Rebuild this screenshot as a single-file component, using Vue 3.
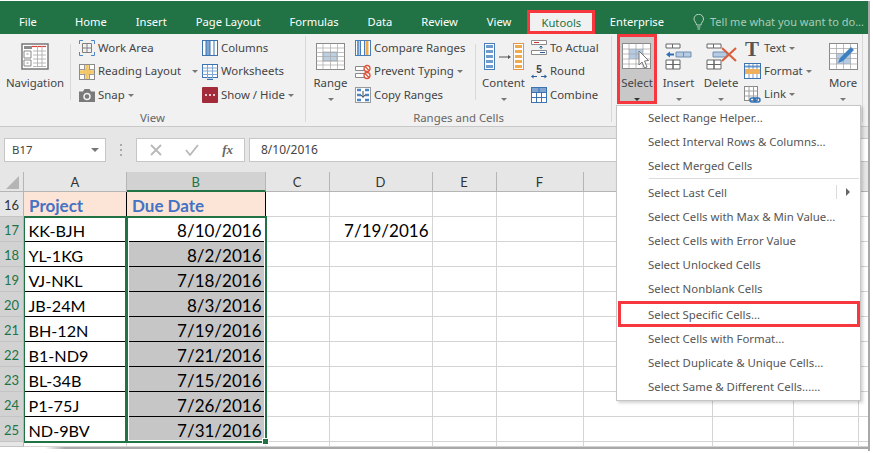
<template>
  <div class="window">
    <div class="tabs">
      <span v-for="tab in tabs" :key="tab" class="tab" :class="{ first: tab === 'File', active: tab === 'Kutools' }">{{ tab }}</span>
      <span class="tell">
        <svg width="12" height="16" viewBox="0 0 12 16" fill="none" stroke="#b9d3c4" stroke-width="1">
          <path d="M3.500 11c0-2.500-2.500-3.500-2.500-6a4.750 4.750 0 0 1 9.500 0c0 2.500-2.500 3.500-2.500 6z" />
          <path d="M4 13h3.500M4.500 15h2.500" />
        </svg>
        Tell me what you want to do...
      </span>
    </div>

    <div class="ribbon">
      <div class="group view-group">
        <div class="group-body">
          <div class="big nav-btn">
            <svg width="28" height="27" viewBox="0 0 28 27">
              <rect x="1" y="1" width="26" height="25" fill="#fff" stroke="#777" stroke-width="1.500" />
              <rect x="3" y="3" width="8" height="3" fill="#8c8c8c" />
              <path d="M11 3.500h14" stroke="#d9443a" stroke-width="1.200" />
              <path d="M3 8h7v7H3zM3 17h7v6H3zM5.500 11h2M5.500 20h2" fill="none" stroke="#888" />
              <path d="M12 8h13M12 12h13M12 16h13M12 20h13M12 23.500h13M16.500 3v21M21 3v21" stroke="#a8a8a8" stroke-width=".8" />
            </svg>
            <span>Navigation</span>
          </div>
          <i class="sep"></i>
          <div class="list list-view-1">
            <div class="row">
              <svg width="16" height="16" viewBox="0 0 16 16" fill="none">
                <path d="M.5 4V.5H4M12 .5h3.500V4M15.500 12v3.500H12M4 15.500H.5V12" stroke="#4a86c5" />
                <path d="M3.500 3.500h9v9h-9zM3.500 8h9M8 3.500v9" stroke="#808080" />
              </svg>
              <span>Work Area</span>
            </div>
            <div class="row">
              <svg width="16" height="16" viewBox="0 0 16 16">
                <rect x=".5" y=".5" width="15" height="15" fill="#fff" stroke="#8a8a8a" />
                <path d="M.5 5.500h15M.5 10.500h15M5.500.5v15M10.500.5v15" stroke="#9a9a9a" />
                <path d="M8 1v14M1 8h14" stroke="#f5c764" stroke-width="3.500" />
              </svg>
              <span>Reading Layout</span>
              <i class="caret caret-far"></i>
            </div>
            <div class="row">
              <svg width="16" height="13" viewBox="0 0 16 13">
                <path d="M0 2.500h4L5.500 0h5L12 2.500h4V13H0z" fill="#7a7a7a" />
                <circle cx="8" cy="7.500" r="3" fill="none" stroke="#f1f1f1" stroke-width="1.500" />
              </svg>
              <span>Snap</span>
              <i class="caret"></i>
            </div>
          </div>
          <div class="list">
            <div class="row">
              <svg width="16" height="16" viewBox="0 0 16 16">
                <rect x=".5" y=".5" width="15" height="15" fill="#fff" stroke="#3d73b0" />
                <rect x="4" y="1" width="4" height="14" fill="#7fa5d0" />
                <path d="M4 .5v15M8 .5v15M12 .5v15" stroke="#3d73b0" />
              </svg>
              <span>Columns</span>
            </div>
            <div class="row">
              <svg width="16" height="16" viewBox="0 0 16 16">
                <rect x=".5" y=".5" width="15" height="13" fill="#fff" stroke="#3d73b0" />
                <path d="M.5 4h15M.5 7h15M.5 10.500h15M5.500 1v13M10.500 1v13" stroke="#7fa5d0" />
                <path d="M5 15.500h6" stroke="#3d73b0" stroke-width="1.500" />
              </svg>
              <span>Worksheets</span>
            </div>
            <div class="row">
              <svg width="16" height="16" viewBox="0 0 16 16">
                <rect width="16" height="16" rx="1" fill="#a32a38" />
                <path d="M3 8h2M7 8h2M11 8h2" stroke="#fff" stroke-width="1.500" />
              </svg>
              <span>Show / Hide</span>
              <i class="caret"></i>
            </div>
          </div>
        </div>
        <div class="group-label">View</div>
      </div>

      <div class="group ranges-group">
        <div class="group-body">
          <div class="big range-btn">
            <svg width="29" height="27" viewBox="0 0 29 27">
              <rect x=".5" y=".5" width="28" height="26" fill="#fff" stroke="#8a8a8a" />
              <rect x="7" y="9" width="14" height="9" fill="#bcd0e4" stroke="#9a9a9a" stroke-width=".6" />
              <path d="M.5 5h28M.5 9.500h28M.5 13.500h28M.5 18h28M.5 22h28M7 .5v26M14.500.5v26M21.500.5v26" stroke="#a8a8a8" stroke-width=".7" />
            </svg>
            <span>Range</span>
            <i class="caret big-caret"></i>
          </div>
          <div class="list list-compare">
            <div class="row">
              <svg width="16" height="16" viewBox="0 0 16 16">
                <rect x=".5" y=".5" width="15" height="15" fill="#fff" stroke="#4a7db8" />
                <rect x="2" y="1" width="2.500" height="14" fill="#6f9ccc" />
                <rect x="10.500" y="1" width="3" height="14" fill="#efa94e" />
                <path d="M5.500 1v14M9.500 1v14" stroke="#4a7db8" />
              </svg>
              <span>Compare Ranges</span>
            </div>
            <div class="row">
              <svg width="16" height="16" viewBox="0 0 16 16">
                <path d="M.5 2.500h9v4h-9zM.5 9.500h9v4h-9z" fill="#fff" stroke="#8a8a8a" />
                <g fill="#fff" stroke="#d9543c" stroke-width="1.300">
                  <circle cx="12" cy="4.500" r="3" />
                  <circle cx="12" cy="11.500" r="3" />
                  <path d="M10 2.500l4 4M10 9.500l4 4" />
                </g>
              </svg>
              <span>Prevent Typing</span>
              <i class="caret"></i>
            </div>
            <div class="row">
              <svg width="16" height="16" viewBox="0 0 16 16">
                <rect x=".5" y=".5" width="15" height="15" fill="#fff" stroke="#9a9a9a" />
                <path d="M2 3h4M2 8h4M2 13h4M10 3h4M10 8h4M10 13h4" stroke="#4a86c5" stroke-width="2.500" />
                <path d="M8 4v6M6 8l2 2.500L10 8" fill="none" stroke="#444" />
              </svg>
              <span>Copy Ranges</span>
            </div>
          </div>
          <i class="sep"></i>
          <div class="big content-btn">
            <svg width="40" height="27" viewBox="0 0 40 27">
              <rect x=".5" y=".5" width="10" height="26" fill="#fff" stroke="#4a7db8" />
              <rect x="29.500" y=".5" width="10" height="26" fill="#fff" stroke="#e59545" />
              <path d="M2 3.500h7M2 8.500h7M2 13.500h7M2 18.500h7M2 23.500h7" stroke="#6f9ccc" stroke-width="3" />
              <path d="M31 3.500h7M31 8.500h7M31 13.500h7M31 18.500h7M31 23.500h7" stroke="#efa94e" stroke-width="3" />
              <path d="M15 14h9" stroke="#555" />
              <path d="M27 14l-3-2v4z" fill="#555" />
            </svg>
            <span>Content</span>
            <i class="caret big-caret"></i>
          </div>
          <div class="list">
            <div class="row">
              <svg width="16" height="16" viewBox="0 0 16 16">
                <path d="M.5.500h15v4H.5zM.5 10.500h15v4H.5z" fill="#fff" stroke="#8a8a8a" />
                <path d="M3 2.500h5" stroke="#c33" />
                <path d="M9 12.500h5" stroke="#2a5f9e" />
                <path d="M10 9V6M8.500 7.500L10 6l1.500 1.500" fill="none" stroke="#2a5f9e" />
              </svg>
              <span>To Actual</span>
            </div>
            <div class="row">
              <svg width="16" height="16" viewBox="0 0 16 16">
                <text x="8" y="9" text-anchor="middle" class="five">5</text>
                <path d="M1 12.500h5M10 12.500h5" stroke="#2a5f9e" />
                <path d="M0 12.500l2.500-2v4zM16 12.500l-2.500-2v4z" fill="#2a5f9e" />
              </svg>
              <span>Round</span>
            </div>
            <div class="row">
              <svg width="16" height="16" viewBox="0 0 16 16">
                <rect x=".5" y=".5" width="15" height="15" fill="#fff" stroke="#3d73b0" />
                <rect x="1" y="1" width="14" height="4" fill="#7fa5d0" />
                <path d="M.5 5.500h15M.5 10.500h15M5.500 5.500v10M10.500 5.500v10M8 .5v5" stroke="#3d73b0" />
              </svg>
              <span>Combine</span>
            </div>
          </div>
        </div>
        <div class="group-label">Ranges and Cells</div>
      </div>

      <div class="group last-group">
        <div class="group-body">
          <div class="big select-btn">
            <svg width="30" height="27" viewBox="0 0 30 27">
              <rect x=".5" y=".5" width="28" height="25" fill="#fff" stroke="#8a8a8a" />
              <rect x="7" y="6" width="14" height="10" fill="#b5cbe3" />
              <path d="M.5 6h28M.5 11h28M.5 16h28M.5 21h28M7 .5v25M14 .5v25M21 .5v25" stroke="#a0a0a0" stroke-width=".7" />
              <path d="M17 8v14l3-3 2.500 6 2.500-1-2.500-6 4-.5z" fill="#fff" stroke="#777" />
            </svg>
            <span>Select</span>
            <i class="caret big-caret dark"></i>
          </div>
          <div class="big insert-btn">
            <svg width="27" height="27" viewBox="0 0 27 27" fill="#fff" stroke="#666">
              <path d="M1 1h6.500v4H1zM7.500 1H15v4H7.500zM1 17h7v4.500H1zM8 17h7v4.500H8zM1 21.500h7V26H1zM8 21.500h7V26H8z" />
              <path d="M11 9h7.500v5H11zM18.500 9H26v5h-7.500z" fill="#b5cbe3" stroke="#6f8fb0" />
              <path d="M9 11.500H3" stroke="#2f6fb5" stroke-width="2" />
              <path d="M1 11.500L5 8.500v6z" fill="#2f6fb5" stroke="none" />
            </svg>
            <span>Insert</span>
            <i class="caret big-caret"></i>
          </div>
          <div class="big delete-btn">
            <svg width="31" height="27" viewBox="0 0 31 27" fill="#fff" stroke="#666">
              <path d="M1 1h6.500v4H1zM7.500 1H15v4H7.500zM1 17h7v4.500H1zM8 17h7v4.500H8zM1 21.500h7V26H1zM8 21.500h7V26H8z" />
              <path d="M7 9h14v5H7z" fill="#b5cbe3" stroke="#6f8fb0" />
              <path d="M16 5l14 13M30 5L16 18" stroke="#d9603f" stroke-width="2.200" />
            </svg>
            <span>Delete</span>
            <i class="caret big-caret"></i>
          </div>
          <div class="list list-text">
            <div class="row">
              <svg width="17" height="20" viewBox="0 0 17 20">
                <text x="8" y="18" text-anchor="middle" class="big-t">T</text>
              </svg>
              <span>Text</span>
              <i class="caret"></i>
            </div>
            <div class="row">
              <svg width="17" height="16" viewBox="0 0 17 16">
                <rect x=".5" y=".5" width="16" height="15" fill="#fff" stroke="#3d73b0" />
                <path d="M1 3.500h15" stroke="#6f9ccc" stroke-width="2" />
                <rect x="1" y="6" width="15" height="5" fill="#efb05e" />
                <path d="M5 1v5M9 1v5M13 1v5M5 11v4M9 11v4M13 11v4" stroke="#3d73b0" stroke-width=".7" />
              </svg>
              <span>Format</span>
              <i class="caret"></i>
            </div>
            <div class="row">
              <svg width="17" height="17" viewBox="0 0 17 17">
                <rect x=".5" y=".5" width="13" height="14" fill="#fff" stroke="#8a8a8a" />
                <path d="M.5 5h13M.5 10h13M5 .5v14M9.500.5v14" stroke="#a0a0a0" />
                <rect x="6" y="12" width="6" height="4" rx="2" fill="none" stroke="#2f6fb5" stroke-width="1.500" />
                <rect x="10" y="12" width="6" height="4" rx="2" fill="none" stroke="#2f6fb5" stroke-width="1.500" />
              </svg>
              <span>Link</span>
              <i class="caret"></i>
            </div>
          </div>
          <div class="big more-btn">
            <svg width="29" height="27" viewBox="0 0 29 27">
              <rect x=".5" y=".5" width="28" height="26" fill="#fff" stroke="#8a8a8a" />
              <rect x="7.500" y="10" width="14" height="11" fill="#b5cbe3" />
              <path d="M.5 5.500h28M.5 10.500h28M.5 15.500h28M.5 21h28M7.500 .5v26M14.500 .5v26M21.500 .5v26" stroke="#a0a0a0" stroke-width=".7" />
              <path d="M9 20l2-5L22 4l3 3-11 11z" fill="#3d7fc0" />
            </svg>
            <span>More</span>
            <i class="caret big-caret"></i>
          </div>
        </div>
      </div>
    </div>

    <div class="formula-bar">
      <div class="name-box">
        <span>B17</span>
        <i class="name-caret"></i>
      </div>
      <div class="dots"><i></i><i></i><i></i></div>
      <div class="fx-box">
        <svg width="12" height="12" viewBox="0 0 12 12" fill="none" stroke="#b8b8b8" stroke-width="1.800"><path d="M1 1l10 10M11 1L1 11" /></svg>
        <svg width="14" height="12" viewBox="0 0 14 12" fill="none" stroke="#b8b8b8" stroke-width="1.800"><path d="M1 6l4 5 8-10" /></svg>
        <span class="fx">fx</span>
      </div>
      <div class="formula-input">8/10/2016</div>
    </div>

    <div class="sheet-wrap">
      <div class="sheet">
        <div class="corner"><i></i></div>
        <div v-for="col in columns" :key="col" class="col-head" :class="{ on: col === 'B' }">{{ col }}</div>
        <template v-for="row in rows" :key="row.num">
          <div class="row-head" :class="{ on: row.num >= 17 && row.num <= 25 }">{{ row.empty ? '' : row.num }}</div>
          <div class="cell" :class="cellClass(row, 'a')">{{ row.a }}</div>
          <div class="cell right" :class="cellClass(row, 'b')">{{ row.b }}</div>
          <div class="cell"></div>
          <div class="cell right">{{ row.d }}</div>
          <div v-for="n in 6" :key="n" class="cell"></div>
        </template>
      </div>
      <div class="sheet overlay">
        <div class="selection sel-a"></div>
        <div class="selection sel-b"><i class="handle"></i></div>
      </div>
    </div>
    <div class="bottom-shadow"></div>

    <ul class="menu">
      <li v-for="item in menuItems" :key="item.text" :class="{ boxed: item.boxed, divided: item.divided }">
        <span>{{ item.text }}</span>
        <i v-if="item.sub" class="sub-arrow"></i>
      </li>
    </ul>
  </div>
</template>

<script setup>
const tabs = ['File', 'Home', 'Insert', 'Page Layout', 'Formulas', 'Data', 'Review', 'View', 'Kutools', 'Enterprise'];
const columns = ['A', 'B', 'C', 'D', 'E', 'F', 'G', 'H', 'I', ''];

const rows = [
  { num: 16, a: 'Project', b: 'Due Date', head: true },
  { num: 17, a: 'KK-BJH', b: '8/10/2016', d: '7/19/2016', active: true },
  { num: 18, a: 'YL-1KG', b: '8/2/2016' },
  { num: 19, a: 'VJ-NKL', b: '7/18/2016' },
  { num: 20, a: 'JB-24M', b: '8/3/2016' },
  { num: 21, a: 'BH-12N', b: '7/19/2016' },
  { num: 22, a: 'B1-ND9', b: '7/21/2016' },
  { num: 23, a: 'BL-34B', b: '7/15/2016' },
  { num: 24, a: 'P1-75J', b: '7/26/2016' },
  { num: 25, a: 'ND-9BV', b: '7/31/2016' },
  { num: 26, empty: true }
];

const menuItems = [
  { text: 'Select Range Helper...' },
  { text: 'Select Interval Rows & Columns...' },
  { text: 'Select Merged Cells' },
  { text: 'Select Last Cell', sub: true, divided: true },
  { text: 'Select Cells with Max & Min Value...' },
  { text: 'Select Cells with Error Value' },
  { text: 'Select Unlocked Cells' },
  { text: 'Select Nonblank Cells' },
  { text: 'Select Specific Cells...', boxed: true },
  { text: 'Select Cells with Format...' },
  { text: 'Select Duplicate & Unique Cells...' },
  { text: 'Select Same & Different Cells......' }
];

const cellClass = (row, col) => {
  if (row.empty) return '';
  if (row.head) return col === 'b' ? 'head-cell left' : 'head-cell';
  if (col === 'b') return row.active ? 'data' : 'data picked';
  return 'data name';
};
</script>

<style>
html, body {
  margin: 0;
  background: #fff;
}
</style>

<style scoped>
.window {
  position: relative;
  width: 870px;
  height: 450px;
  margin-top: 1px;
  font-family: "Noto Sans", sans-serif;
  font-size: 11.400px;
  color: #444;
  overflow: hidden;
  border-right: 2px solid #a8a8a8;
  box-sizing: border-box;
}

.tabs {
  display: flex;
  align-items: flex-end;
  height: 33px;
  background: #217346;
  color: #fff;
  font-size: 11.200px;
}

.tab {
  display: flex;
  align-items: center;
  height: 24px;
  padding: 0 14.500px 1px;
  white-space: nowrap;
  box-sizing: border-box;
}

.tab.first {
  padding: 0 0 1px 19px;
  margin-right: 23.500px;
}

.tab.active {
  justify-content: center;
  width: 68px;
  background: #f1f1f1;
  color: #217346;
  border: 3px solid #f6383e;
  padding: 0;
  margin: 0 0 0 1.500px;
}

.tell {
  display: flex;
  align-items: center;
  gap: 5px;
  height: 24px;
  padding-bottom: 1px;
  box-sizing: border-box;
  margin-left: 14.500px;
  font-size: 11px;
  color: #a9cbb8;
  white-space: nowrap;
}

.ribbon {
  display: flex;
  height: 93px;
  background: #f1f1f1;
  border-bottom: 1px solid #c9c9c9;
  box-sizing: border-box;
}

.group {
  display: flex;
  flex-direction: column;
  border-right: 1px solid #d8d8d8;
  margin: 2px 0 4px;
  box-sizing: border-box;
}

.view-group { width: 306px; }
.ranges-group { width: 306px; }
.last-group { width: 251px; margin-top: 0; }

.group-body {
  display: flex;
  flex: none;
  height: 72px;
}

.group-label {
  text-align: center;
  line-height: 14px;
  margin-top: 3px;
  color: #666;
}

.big {
  display: flex;
  flex-direction: column;
  align-items: center;
  flex: none;
  box-sizing: border-box;
  padding-top: 7px;
}

.big span {
  line-height: 16px;
  margin-top: 5px;
}

.big-caret {
  margin: 7px 0 0;
}

.nav-btn { width: 70px; }
.range-btn { width: 49px; }
.content-btn { width: 55px; }

.select-btn {
  width: 40px;
  height: 70px;
  margin-left: 5px;
  background: #c8c8c8;
  border: 3px solid #f6383e;
  padding-top: 6px;
}

.insert-btn { width: 43px; padding-top: 9px; }
.delete-btn { width: 42px; padding-top: 9px; }
.more-btn { width: 48px; margin-left: 5px; padding-top: 9px; }

.sep {
  display: block;
  flex: none;
  width: 1px;
  height: 56px;
  margin-top: 8px;
  background: #d8d8d8;
}

.list {
  display: flex;
  flex-direction: column;
  flex: none;
  padding-top: .5px;
}

.last-group .list {
  padding-top: 2.500px;
}

.list-view-1 {
  width: 123px;
  margin-left: 8px;
}

.list-compare {
  width: 120px;
}

.list-text {
  width: 70px;
  margin-left: 2px;
}

.row {
  display: flex;
  align-items: center;
  gap: 3px;
  height: 23.500px;
  white-space: nowrap;
}

.row span {
  padding-bottom: 2px;
}

.row svg {
  flex: none;
}

.caret {
  display: block;
  flex: none;
  width: 0;
  height: 0;
  border-left: 3px solid transparent;
  border-right: 3px solid transparent;
  border-top: 3px solid #777;
}

.caret-far {
  margin-left: 8px;
}

.caret.dark {
  border-top-color: #333;
}

.five {
  font: bold 10px "Liberation Sans", sans-serif;
  fill: #444;
}

.big-t {
  font: bold 21px "Liberation Serif", serif;
  fill: #555;
}

.formula-bar {
  display: flex;
  align-items: center;
  height: 45px;
  background: #e6e6e6;
  padding: 0 0 0 4px;
  box-sizing: border-box;
}

.name-box,
.fx-box,
.formula-input {
  display: flex;
  align-items: center;
  height: 24px;
  background: #fff;
  border: 1px solid #c6c6c6;
  box-sizing: border-box;
}

.name-box {
  justify-content: space-between;
  width: 102px;
  padding: 0 6px 0 7px;
}

.name-caret {
  width: 0;
  height: 0;
  border-left: 4px solid transparent;
  border-right: 4px solid transparent;
  border-top: 4px solid #777;
}

.dots {
  display: flex;
  flex-direction: column;
  gap: 3px;
  width: 30px;
  align-items: center;
}

.dots i {
  width: 2px;
  height: 2px;
  background: #aaa;
}

.fx-box {
  justify-content: space-between;
  width: 109px;
  padding: 0 11px 0 13px;
}

.fx {
  font: italic bold 13px "Liberation Serif", serif;
  color: #666;
}

.formula-input {
  flex: 1;
  margin-left: 4px;
  padding-left: 11px;
  font-size: 12px;
  border-right: none;
}

.sheet-wrap {
  display: grid;
}

.sheet {
  grid-area: 1 / 1;
  display: grid;
  grid-template-columns: 24px 103px 138.500px 64px 103px 64px 87px 129px 81px 65px 10px;
  grid-template-rows: 20px repeat(10, 25px) 5px;
  overflow: hidden;
  font-family: Lato, sans-serif;
  font-size: 17px;
  color: #000;
}

.overlay {
  pointer-events: none;
  overflow: visible;
}

.corner {
  display: flex;
  align-items: flex-end;
  justify-content: flex-end;
  padding: 0 4px 2px 0;
  background: #e6e6e6;
  border-right: 1px solid #b5b5b5;
  border-bottom: 1px solid #b5b5b5;
  box-sizing: border-box;
}

.corner i {
  width: 0;
  height: 0;
  border-left: 13px solid transparent;
  border-bottom: 13px solid #b5b5b5;
}

.col-head {
  background: #e6e6e6;
  border-right: 1px solid #b5b5b5;
  border-bottom: 1px solid #b5b5b5;
  box-sizing: border-box;
  text-align: center;
  font-size: 13px;
  line-height: 21px;
  color: #333;
}

.col-head.on {
  background: #d2d2d2;
  border-bottom: 2px solid #217346;
  color: #217346;
}

.row-head {
  background: #e6e6e6;
  border-right: 1px solid #b5b5b5;
  border-bottom: 1px solid #c4c4c4;
  box-sizing: border-box;
  text-align: center;
  font-size: 13px;
  line-height: 27px;
  color: #333;
  overflow: hidden;
}

.row-head.on {
  background: #d2d2d2;
  color: #217346;
}

.cell {
  border-right: 1px solid #d4d4d4;
  border-bottom: 1px solid #d4d4d4;
  box-sizing: border-box;
  padding: 0 3px 0 5px;
  line-height: 27px;
  white-space: nowrap;
  overflow: hidden;
}

.cell.right {
  text-align: right;
}

.cell.data {
  border-bottom-color: #000;
  border-right-color: #000;
}

.cell.name {
  font-size: 16.200px;
  padding-left: 4.500px;
}

.cell.picked {
  background: #c6c6c6;
}

.cell.head-cell {
  background: #fce4d6;
  border-right-color: #000;
  border-bottom-color: #000;
  font-weight: 700;
  color: #4472c4;
}

.cell.head-cell.left {
  text-align: left;
}

.selection {
  grid-row: 3 / 12;
  position: relative;
  border: 2px solid #217346;
  box-shadow: inset 0 0 0 1px #fff;
  margin: -1px;
}

.sel-a {
  grid-column: 2;
  box-shadow: none;
  margin-left: 0;
  margin-right: 0;
  border-left-width: 1px;
}

.sel-b {
  grid-column: 3;
}

.handle {
  position: absolute;
  right: -4px;
  bottom: -4px;
  width: 5px;
  height: 5px;
  background: #217346;
  border: 1px solid #fff;
}

.bottom-shadow {
  height: 3px;
  margin-top: -1px;
  background: linear-gradient(90deg, #fff 45px, #a8a8a8 65px);
}

.menu {
  position: absolute;
  left: 616px;
  top: 104px;
  width: 245px;
  height: 296px;
  margin: 0;
  padding: 0;
  list-style: none;
  background: #fff;
  border: 1px solid #c6c6c6;
  box-shadow: 2px 2px 3px rgba(0, 0, 0, .18);
  box-sizing: border-box;
}

.menu li {
  position: relative;
  display: flex;
  align-items: center;
  height: 24px;
  padding: 0 0 2px 31px;
  box-sizing: border-box;
  white-space: nowrap;
  color: #555;
}

.menu li.divided {
  height: 27px;
  padding-top: 3px;
}

.menu li.divided::before {
  content: "";
  position: absolute;
  left: 32px;
  right: 1px;
  top: 0;
  height: 1px;
  background: #dcdcdc;
}

.menu li.boxed {
  margin-left: 1px;
  padding: 0 0 0 27px;
  border: 3px solid #f6383e;
  height: 26px;
}

.sub-arrow {
  position: absolute;
  right: 10px;
  width: 0;
  height: 0;
  border-top: 4px solid transparent;
  border-bottom: 4px solid transparent;
  border-left: 4px solid #666;
}

.sub-arrow::before {
  content: "";
  position: absolute;
  left: -14px;
  top: -7px;
  width: 1px;
  height: 14px;
  background: #dcdcdc;
}
</style>
